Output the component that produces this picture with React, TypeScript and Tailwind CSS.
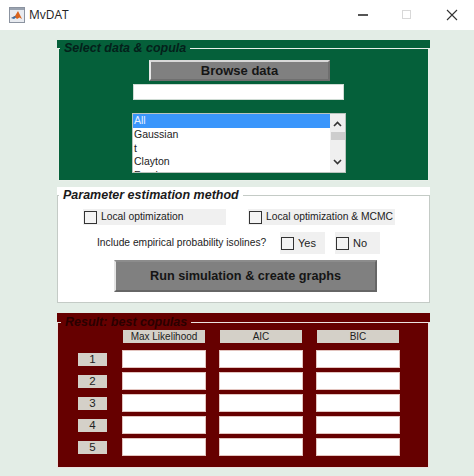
const sans = "font-['Liberation_Sans',Arial,sans-serif]";

function Check({ label, className, textClass }: { label: string; className: string; textClass: string }) {
  return (
    <div className={`flex items-center bg-[#f0f0f0] ${className}`}>
      <span className="w-[13px] h-[13px] border border-[#333] bg-[#f4f4f4] shrink-0" />
      <span className={`ml-[4px] leading-none whitespace-nowrap text-[#222] ${textClass}`}>{label}</span>
    </div>
  );
}

const rows = ["1", "2", "3", "4", "5"];

export default function App() {
  return (
    <div className={`w-[474px] h-[476px] bg-[#e3ede6] overflow-hidden ${sans}`}>
      {/* title bar */}
      <div className="h-[30px] bg-white flex items-center relative">
        <svg width="16" height="16" viewBox="0 0 16 16" className="ml-[9px]">
          <rect x="0.5" y="0.5" width="15" height="15" fill="#e8ebf0" stroke="#8b93a0" />
          <rect x="1" y="1" width="14" height="2" fill="#9aa3b0" />
          <path d="M2 11 L6 9 L9 4 L13 12 L10.5 10.5 L8 12 L6 10 Z" fill="#d9641e" />
          <path d="M2 11 L6 9 L7 10.5 L5 12 Z" fill="#3b6ea5" />
        </svg>
        <span className="ml-[4px] text-[12px] text-[#222] font-['Open_Sans',sans-serif]">MvDAT</span>
        <div className="absolute left-[358px] top-[14px] w-[10px] h-[2px] bg-[#555]" />
        <div className="absolute left-[402px] top-[10px] w-[9px] h-[9px] border border-[#d8d8d8]" />
        <svg width="12" height="12" viewBox="0 0 12 12" className="absolute left-[446px] top-[9px]">
          <path d="M1 1 L11 11 M11 1 L1 11" stroke="#333" strokeWidth="1.1" fill="none" />
        </svg>
      </div>

      <div className="pt-[10px] pl-[57px] w-[430px] flex flex-col">
        {/* Select data & copula */}
        <div className="h-[141px] flex flex-col">
          <div className="h-[8px] bg-[#05603a] shrink-0" />
          <div className="relative flex-1 mx-[1px] bg-[#05603a] border border-[#e8efe9]">
            <span className="absolute left-[1px] top-[-8px] px-[4px] bg-[#05603a] text-[12.5px] leading-[15px] font-bold italic text-[#04211a]">
              Select data &amp; copula
            </span>
            <div className="flex flex-col items-start pl-[73px] pt-[11px]">
              <button className="ml-[17px] w-[181px] h-[21px] bg-[#808080] border-2 border-t-[#d8d8d8] border-l-[#e8e8e8] border-r-[#6f6f6f] border-b-[#6f6f6f] text-[13px] leading-none font-bold text-[#151515]">
                Browse data
              </button>
              <div className="ml-[1px] mt-[3px] w-[211px] h-[16px] bg-white border border-[#cfdcd4]" />
              <div className="mt-[13px] w-[214px] h-[60px] bg-white border border-[#b9c4bd] flex">
                <div className="flex-1 text-[10.5px] leading-[13.7px] text-[#222] overflow-hidden">
                  <div className="h-[14px] bg-[#3a96fb] text-[#e6f1ff] pl-[1px]">All</div>
                  <div className="pl-[1px]">Gaussian</div>
                  <div className="pl-[1px]">t</div>
                  <div className="pl-[1px]">Clayton</div>
                  <div className="pl-[1px] h-[4px] overflow-hidden">Frank</div>
                </div>
                <div className="w-[15px] bg-[#efefef] flex flex-col items-center">
                  <svg width="9" height="6" viewBox="0 0 9 6" className="mt-[7px]">
                    <path d="M1 5 L4.5 1.5 L8 5" stroke="#333" strokeWidth="1.6" fill="none" />
                  </svg>
                  <div className="mt-[5px] w-[14px] h-[8px] bg-[#cdcdcd]" />
                  <svg width="9" height="6" viewBox="0 0 9 6" className="mt-auto mb-[7px]">
                    <path d="M1 1 L4.5 4.5 L8 1" stroke="#333" strokeWidth="1.6" fill="none" />
                  </svg>
                </div>
              </div>
            </div>
          </div>
        </div>

        {/* Parameter estimation method */}
        <div className="mt-[6px] h-[116px] bg-white pt-[8px]">
          <div className="relative h-full border border-[#c4cbc6]">
            <span className="absolute left-[1px] top-[-8px] px-[4px] bg-white text-[12.5px] leading-[15px] font-bold italic text-[#1a1a1a]">
              Parameter estimation method
            </span>
            <div className="flex pl-[25px] pt-[13px]">
              <Check label="Local optimization" textClass="text-[10.3px]" className="w-[143px] h-[16px] pl-[1px]" />
              <Check label="Local optimization & MCMC" textClass="text-[10.3px]" className="ml-[22px] w-[147px] h-[16px] pl-[1px]" />
            </div>
            <div className="flex items-center pl-[39px] mt-[7px] h-[22px]">
              <span className="w-[183px] text-[10.25px] leading-none whitespace-nowrap text-[#222]">Include empirical probability isolines?</span>
              <Check label="Yes" textClass="text-[11px]" className="w-[45px] h-[22px] pl-[1px]" />
              <Check label="No" textClass="text-[11px]" className="ml-[10px] w-[45px] h-[22px] pl-[1px]" />
            </div>
            <button className="ml-[56px] mt-[6px] w-[263px] h-[32px] bg-[#808080] border-2 border-t-[#8c8c8c] border-l-[#e4e4e4] border-r-[#666] border-b-[#666] text-[12.7px] leading-none font-bold text-[#151515]">
              Run simulation &amp; create graphs
            </button>
          </div>
        </div>

        {/* Result: best copulas */}
        <div className="mt-[10px] h-[155px] flex flex-col">
          <div className="h-[9px] bg-[#660000] shrink-0" />
          <div className="relative flex-1 mr-[1px] bg-[#660000] border border-[#ece2df]">
            <span className="absolute left-[3px] top-[-8px] px-[4px] bg-[#660000] text-[12.5px] leading-[15px] font-bold italic text-[#2a0000]">
              Result: best copulas
            </span>
            <div className="grid grid-cols-[31px_84px_84px_84px] gap-x-[13px] pl-[20px] pt-[7px] justify-start">
              <div />
              <div className="mx-[1px] h-[13px] bg-[#d4d0c8] text-[10px] leading-[13px] text-center text-[#222]">Max Likelihood</div>
              <div className="mx-[1px] h-[13px] bg-[#d4d0c8] text-[10px] leading-[13px] text-center text-[#222]">AIC</div>
              <div className="mx-[1px] h-[13px] bg-[#d4d0c8] text-[10px] leading-[13px] text-center text-[#222]">BIC</div>
            </div>
            <div className="grid grid-cols-[31px_84px_84px_84px] gap-x-[13px] gap-y-[4px] pl-[20px] pt-[7px] justify-start items-center">
              {rows.map((r) => (
                <div key={r} className="contents">
                  <div className="w-[29px] h-[13px] bg-[#d4d0c8] text-[11.5px] leading-[13px] text-center text-[#222]">{r}</div>
                  <div className="h-[18px] bg-white border border-[#e3c4bf]" />
                  <div className="h-[18px] bg-white border border-[#e3c4bf]" />
                  <div className="h-[18px] bg-white border border-[#e3c4bf]" />
                </div>
              ))}
            </div>
          </div>
        </div>
      </div>
    </div>
  );
}
